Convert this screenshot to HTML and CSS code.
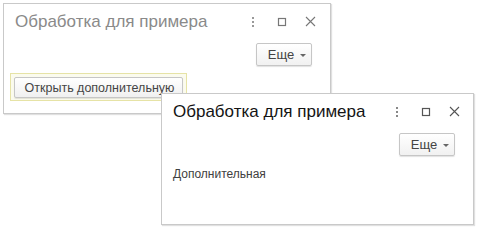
FILE: index.html
```html
<!DOCTYPE html>
<html lang="ru">
<head>
<meta charset="utf-8">
<link rel="stylesheet" href="styles.css">
</head>
<body>
<div class="desk">
  <div class="win win-back">
    <div class="head">
      <span class="title">Обработка для примера</span>
      <div class="tools">
        <svg class="ico" width="4" height="12" viewBox="0 0 4 12"><rect x="1" y="1" width="2" height="2"/><rect x="1" y="5" width="2" height="2"/><rect x="1" y="9" width="2" height="2"/></svg>
        <svg class="ico" width="10" height="10" viewBox="0 0 10 10"><rect x="1.5" y="1.5" width="7" height="7" fill="none" stroke-width="1.2"/></svg>
        <svg class="ico" width="11" height="11" viewBox="0 0 11 11"><path d="M1 1L10 10M10 1L1 10" fill="none" stroke-width="1.1"/></svg>
      </div>
    </div>
    <div class="bar">
      <button class="more">Еще <span class="caret"></span></button>
    </div>
    <div class="content">
      <div class="focus">
        <button class="cmd">Открыть дополнительную</button>
      </div>
    </div>
  </div>

  <div class="win win-front">
    <div class="head">
      <span class="title">Обработка для примера</span>
      <div class="tools">
        <svg class="ico" width="4" height="12" viewBox="0 0 4 12"><rect x="1" y="1" width="2" height="2"/><rect x="1" y="5" width="2" height="2"/><rect x="1" y="9" width="2" height="2"/></svg>
        <svg class="ico" width="10" height="10" viewBox="0 0 10 10"><rect x="1.5" y="1.5" width="7" height="7" fill="none" stroke-width="1.2"/></svg>
        <svg class="ico" width="11" height="11" viewBox="0 0 11 11"><path d="M1 1L10 10M10 1L1 10" fill="none" stroke-width="1.1"/></svg>
      </div>
    </div>
    <div class="bar">
      <button class="more">Еще <span class="caret"></span></button>
    </div>
    <div class="content">
      <div class="label">Дополнительная</div>
    </div>
  </div>
</div>
</body>
</html>
```
FILE: styles.css
```css
html, body {
  margin: 0;
  padding: 0;
  background: #fff;
}
body {
  font-family: "Liberation Sans", Arial, sans-serif;
  width: 480px;
  height: 232px;
  overflow: hidden;
}
.desk {
  position: relative;
  width: 480px;
  height: 232px;
}
.win {
  position: absolute;
  box-sizing: border-box;
  background: #fff;
  border: 1px solid #c9c9c9;
  box-shadow: 1px 1px 1px rgba(0,0,0,0.12);
  display: flex;
  flex-direction: column;
}
.win-back {
  left: 3px;
  top: 3px;
  width: 328px;
  height: 111px;
}
.win-front {
  left: 161px;
  top: 93px;
  width: 313px;
  height: 132px;
}
.head {
  height: 35px;
  display: flex;
  align-items: center;
  padding: 0 14px 0 11px;
  flex-shrink: 0;
}
.win-front .head {
  padding-left: 11px;
  padding-right: 13px;
}
.title {
  font-size: 17px;
  flex: 1;
  white-space: nowrap;
  padding-top: 1px;
}
.win-back .title { color: #8a8a8a; }
.win-front .title { color: #141414; }
.tools {
  display: flex;
  align-items: center;
}
.ico { display: block; }
.ico:nth-child(1) { margin-right: 22px; }
.ico:nth-child(2) { margin-right: 18px; }
.win-back .ico { fill: #8a8a8a; stroke: #777; }
.win-back .ico:nth-child(1) { fill: #999; stroke: none; }
.win-front .ico { fill: #555; stroke: #555; }
.win-front .ico:nth-child(1) { fill: #888; stroke: none; }
.bar {
  display: flex;
  justify-content: flex-end;
  padding: 4px 18px 0 0;
}
.more {
  font-family: inherit;
  font-size: 13px;
  color: #444;
  height: 23px;
  width: 56px;
  padding: 0 0 0 6px;
  border: 1px solid #c6c6c6;
  border-radius: 2px;
  background: linear-gradient(#ffffff, #f1f1f1);
  box-shadow: 0 1px 1px rgba(0,0,0,0.12);
  display: flex;
  align-items: center;
  justify-content: center;
  gap: 6px;
}
.caret {
  width: 0;
  height: 0;
  border-left: 3px solid transparent;
  border-right: 3px solid transparent;
  border-top: 3px solid #666;
  margin-top: 1px;
}
.content {
  padding: 7px 0 0 6px;
}
.focus {
  display: inline-block;
  border: 1px solid #e6e3a6;
  background: #fbfbee;
  padding: 3px 3px 2px 3px;
}
.cmd {
  font-family: inherit;
  font-size: 12.5px;
  color: #454545;
  height: 21px;
  width: 169px;
  padding: 0 0 0 2px;
  border: 1px solid #c6c6c6;
  border-radius: 2px;
  background: linear-gradient(#ffffff, #f0f0f0);
  box-shadow: 0 1px 1px rgba(0,0,0,0.1);
  display: block;
}
.win-front .content {
  padding: 11px 0 0 11px;
}
.label {
  font-size: 12px;
  color: #404040;
}
```
